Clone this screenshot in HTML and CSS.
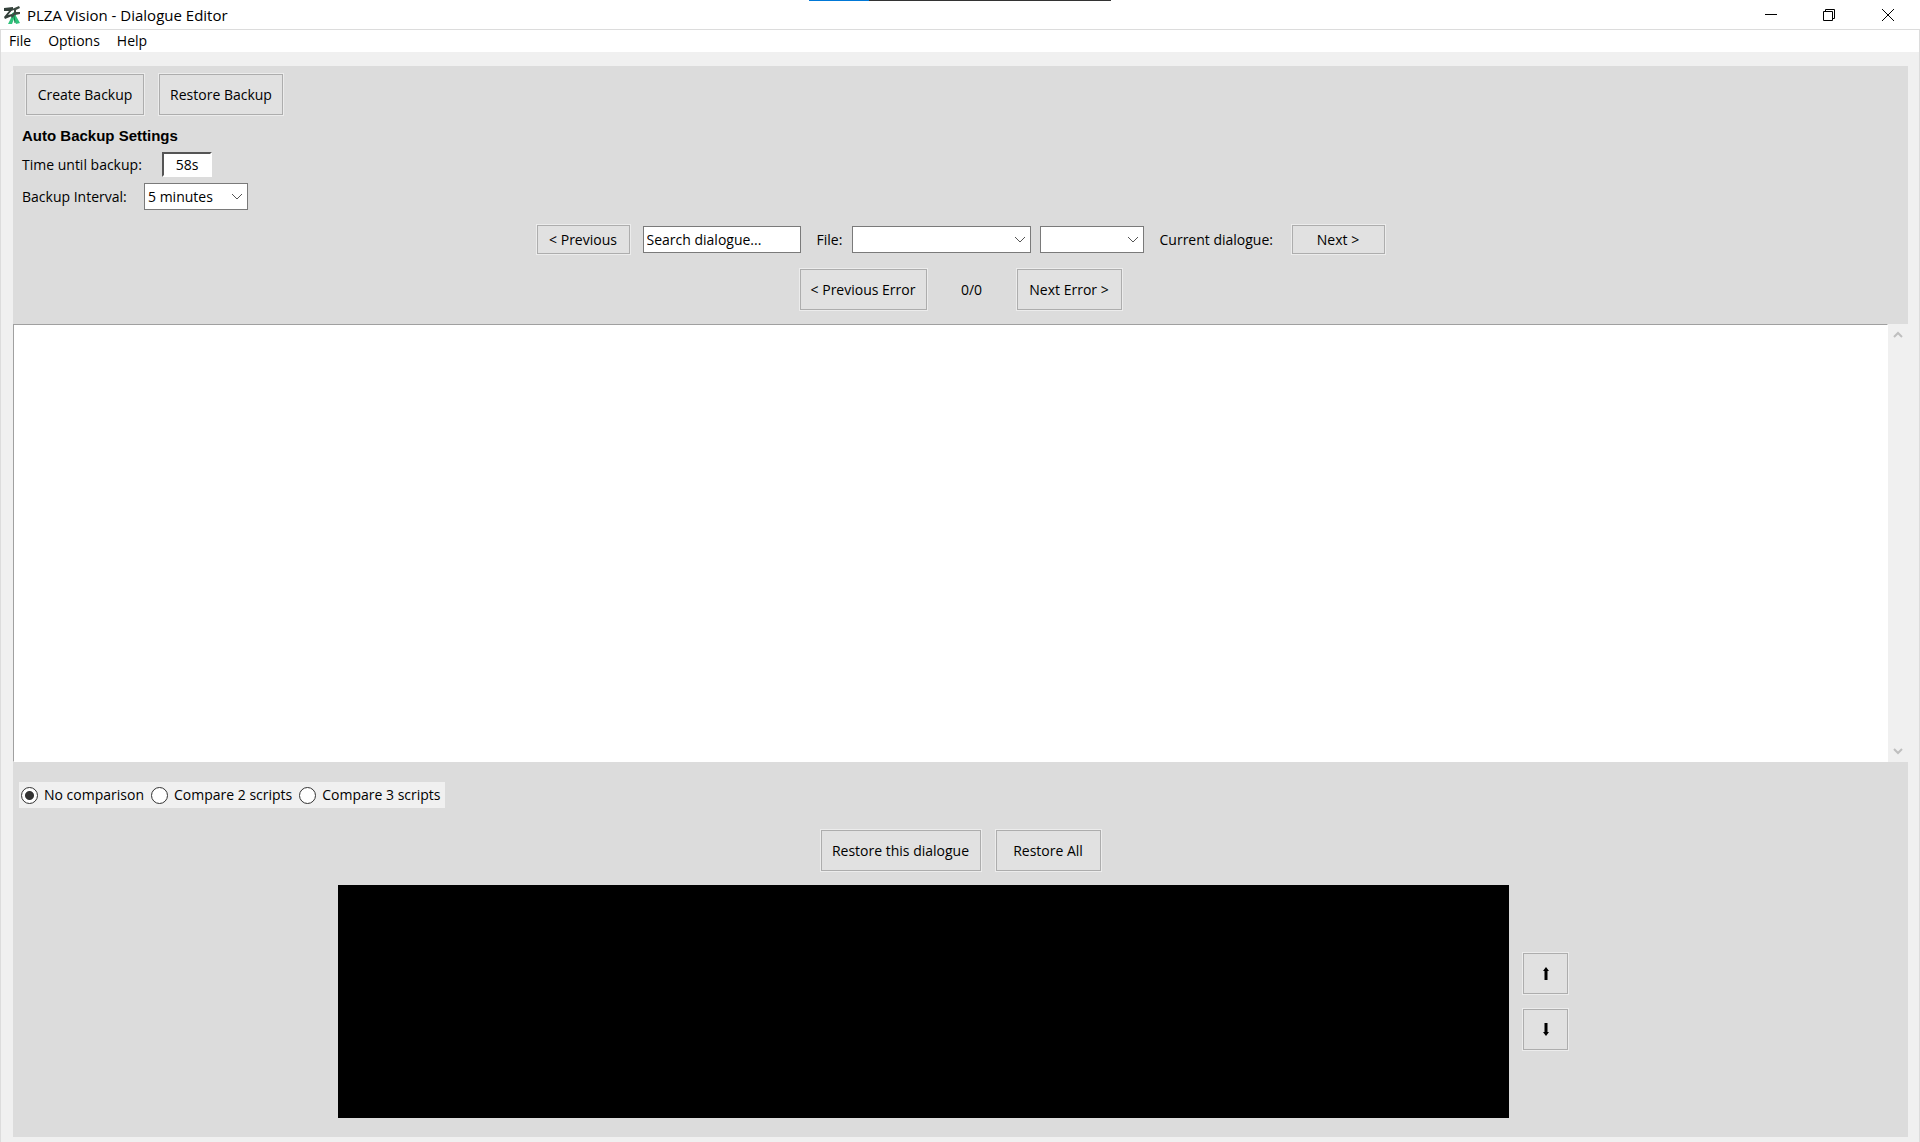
FILE: index.html
```html
<!DOCTYPE html>
<html lang="en">
<head>
<meta charset="UTF-8">
<meta name="viewport" content="width=device-width, initial-scale=1.0">
<title>PLZA Vision - Dialogue Editor</title>
<link rel="stylesheet" href="styles.css">
</head>
<body>
    <div class="load-bar"></div>
    <header class="titlebar">
        <svg class="logo" width="18" height="20" viewBox="0 0 18 20">
            <path d="M9 8L13 7L13 11L17 18L13 19L11 14L9 19L5 19L8 13Z" fill="#2fc27a"/>
            <path d="M1 3L10 2L10 4L5 10L9 9L9 11L2 14L1 12L6 6L1 6Z" fill="#33403a"/>
            <path d="M9 4L16 1L17 3L13 5L13 7L17 7L17 9L12 10L9 13L8 11L11 7L11 5L8 6Z" fill="#3c4a42"/>
            <path d="M11 11L12 18" stroke="#167a48" stroke-width="1"/>
        </svg>
        <h1>PLZA Vision - Dialogue Editor</h1>
        <div class="window-buttons">
            <button type="button" aria-label="Minimize">
                <svg width="12" height="12" viewBox="0 0 12 12"><path d="M0 5.500h12"/></svg>
            </button>
            <button type="button" aria-label="Restore">
                <svg width="12" height="12" viewBox="0 0 12 12"><path d="M.5 2.500h9v9h-9zM2.500 2.500v-2h9v9h-2"/></svg>
            </button>
            <button type="button" aria-label="Close">
                <svg width="12" height="12" viewBox="0 0 12 12"><path d="M0 0l12 12M12 0L0 12"/></svg>
            </button>
        </div>
    </header>
    <nav class="menubar">
        <a href="#">File</a>
        <a href="#">Options</a>
        <a href="#">Help</a>
    </nav>

    <main class="window">
        <section class="top">
            <div class="backup-buttons">
                <button type="button" class="btn create">Create Backup</button>
                <button type="button" class="btn restore">Restore Backup</button>
            </div>
            <h2>Auto Backup Settings</h2>
            <div class="setting">
                <label class="time-label" for="timer">Time until backup:</label>
                <input type="text" id="timer" class="timer" value="58s" readonly>
            </div>
            <div class="setting">
                <label class="interval-label" for="interval">Backup Interval:</label>
                <span class="combo small">
                    <select id="interval">
                        <option>5 minutes</option>
                    </select>
                    <svg width="12" height="7" viewBox="0 0 12 7"><path d="M1 1L6 6L11 1"/></svg>
                </span>
            </div>
            <div class="nav-row">
                <button type="button" class="btn step">&lt; Previous</button>
                <input type="text" class="search" value="Search dialogue..." aria-label="Search dialogue">
                <label class="file-label" for="file">File:</label>
                <span class="combo large">
                    <select id="file"><option></option></select>
                    <svg width="12" height="7" viewBox="0 0 12 7"><path d="M1 1L6 6L11 1"/></svg>
                </span>
                <span class="combo small">
                    <select aria-label="Dialogue"><option></option></select>
                    <svg width="12" height="7" viewBox="0 0 12 7"><path d="M1 1L6 6L11 1"/></svg>
                </span>
                <span class="current">Current dialogue:</span>
                <button type="button" class="btn step">Next &gt;</button>
            </div>
            <div class="error-row">
                <button type="button" class="btn prev-error">&lt; Previous Error</button>
                <span class="error-count">0/0</span>
                <button type="button" class="btn next-error">Next Error &gt;</button>
            </div>
        </section>

        <section class="editor">
            <textarea aria-label="Dialogue text"></textarea>
            <div class="scrollbar">
                <svg width="10" height="8" viewBox="0 0 10 8"><path d="M1 6L5 2L9 6"/></svg>
                <svg width="10" height="8" viewBox="0 0 10 8"><path d="M1 2L5 6L9 2"/></svg>
            </div>
        </section>

        <section class="bottom">
            <div class="compare">
                <label><input type="radio" name="compare" checked>No comparison</label>
                <label><input type="radio" name="compare">Compare 2 scripts</label>
                <label><input type="radio" name="compare">Compare 3 scripts</label>
            </div>
            <div class="restore-row">
                <button type="button" class="btn restore-one">Restore this dialogue</button>
                <button type="button" class="btn restore-all">Restore All</button>
            </div>
            <div class="preview-row">
                <div class="preview"></div>
                <div class="arrows">
                    <button type="button" class="btn arrow" aria-label="Up">
                        <svg width="8" height="14" viewBox="0 0 8 14"><path d="M4 0L7 4H5.500V13H2.500V4H1Z"/></svg>
                    </button>
                    <button type="button" class="btn arrow" aria-label="Down">
                        <svg width="8" height="14" viewBox="0 0 8 14"><path d="M4 13L7 9H5.500V0H2.500V9H1Z"/></svg>
                    </button>
                </div>
            </div>
        </section>
    </main>
</body>
</html>
```

FILE: styles.css
```css
* {
    box-sizing: border-box;
}

body {
    display: flex;
    flex-direction: column;
    min-height: 100vh;
    margin: 0;
    background-color: #f0f0f0;
    color: #000;
    font-family: "Open Sans", "Noto Sans", sans-serif;
    font-size: 14px;
    line-height: 20px;
}

button,
input,
select,
textarea {
    font: inherit;
    color: inherit;
    margin: 0;
}

/* thin progress strip over the title bar */
.load-bar {
    position: absolute;
    top: 0;
    left: 50%;
    width: 302px;
    height: 1px;
    margin-left: -151px;
    background: linear-gradient(to right, #0078d7 60px, #333 60px);
}

.titlebar {
    display: flex;
    align-items: center;
    height: 30px;
    padding-left: 3px;
    background-color: #fff;
    border-bottom: 1px solid #dcdcdc;
}

.titlebar h1 {
    flex: 1;
    margin: 0 0 0 6px;
    font-size: 15px;
    font-weight: normal;
}

.window-buttons {
    display: flex;
}

.window-buttons button {
    display: flex;
    align-items: center;
    justify-content: center;
    width: 58px;
    height: 28px;
    padding: 0;
    border: none;
    background: none;
}

.window-buttons button:last-child {
    margin-left: 1px;
    margin-right: 3px;
}

.window-buttons svg {
    fill: none;
    stroke: #000;
}

.menubar {
    display: flex;
    gap: 17px;
    height: 22px;
    padding-left: 8px;
    background-color: #fff;
    border-left: 1px solid #dcdcdc;
    border-right: 1px solid #dcdcdc;
    line-height: 22px;
}

.menubar a {
    color: #000;
    text-decoration: none;
}

.window {
    flex: 1;
    display: flex;
    flex-direction: column;
    padding: 14px 11px 5px 12px;
    border-left: 1px solid #dcdcdc;
    border-right: 1px solid #dcdcdc;
}

.top,
.bottom {
    background-color: #dcdcdc;
}

.btn {
    height: 41px;
    padding: 0;
    border: 1px solid #adadad;
    background-color: #e1e1e1;
    outline: 1px solid #ececec;
    white-space: nowrap;
}

.top {
    padding: 8px 0 14px;
}

.backup-buttons {
    display: flex;
    gap: 15px;
    padding-left: 13px;
}

.create {
    width: 118px;
}

.restore {
    width: 124px;
}

.top h2 {
    margin: 11px 0 6px;
    padding-left: 9px;
    font-family: "Liberation Sans", Arial, sans-serif;
    font-size: 15px;
    line-height: 20px;
}

.setting {
    display: flex;
    align-items: center;
    margin-bottom: 6px;
    padding-left: 9px;
}

.time-label {
    width: 140px;
}

.interval-label {
    width: 122px;
}

.timer {
    width: 50px;
    height: 25px;
    padding: 0;
    border: 2px solid #fff;
    border-top-color: #555;
    border-left-color: #555;
    background-color: #fff;
    text-align: center;
}

.combo {
    position: relative;
    height: 27px;
}

.combo select {
    width: 100%;
    height: 100%;
    padding: 0 3px;
    border: 1px solid #7a7a7a;
    border-radius: 0;
    background-color: #fff;
    appearance: none;
}

.combo svg {
    position: absolute;
    top: 10px;
    right: 5px;
    fill: none;
    stroke: #555;
    pointer-events: none;
}

.small {
    width: 104px;
}

.large {
    width: 179px;
}

.nav-row {
    display: flex;
    align-items: center;
    justify-content: center;
    margin-top: 15px;
}

.step {
    width: 93px;
    height: 29px;
}

.search {
    width: 158px;
    height: 27px;
    margin-left: 13px;
    padding: 0 3px;
    border: 1px solid #7a7a7a;
}

.file-label {
    width: 35px;
    margin-left: 16px;
}

.large + .small {
    margin-left: 9px;
}

.current {
    width: 132px;
    margin-left: 16px;
}

.error-row {
    display: flex;
    align-items: center;
    justify-content: center;
    margin-top: 15px;
}

.prev-error {
    width: 127px;
}

.error-count {
    width: 90px;
    text-align: center;
}

.next-error {
    width: 105px;
}

.editor {
    flex: 1;
    display: flex;
    min-height: 200px;
}

.editor textarea {
    flex: 1;
    padding: 4px;
    border: 1px solid #fff;
    border-top-color: #a0a0a0;
    border-left-color: #a0a0a0;
    background-color: #fff;
    outline: none;
    resize: none;
}

.scrollbar {
    display: flex;
    flex-direction: column;
    align-items: center;
    justify-content: space-between;
    width: 20px;
    padding: 7px 0;
}

.scrollbar svg {
    fill: none;
    stroke: #bfbfbf;
    stroke-width: 2;
}

.bottom {
    padding: 20px 0 19px;
}

.compare {
    display: flex;
    gap: 7px;
    width: fit-content;
    height: 26px;
    margin-left: 6px;
    padding: 0 4px 0 2px;
    background-color: #f0f0f0;
}

.compare label {
    display: flex;
    align-items: center;
    gap: 6px;
}

.compare input {
    width: 17px;
    height: 17px;
    border: 1px solid #333;
    border-radius: 50%;
    background-color: #fff;
    appearance: none;
}

.compare input:checked {
    background: radial-gradient(circle, #333 4px, #fff 5px);
}

.restore-row {
    display: flex;
    justify-content: center;
    gap: 15px;
    margin-top: 22px;
}

.restore-one {
    width: 160px;
}

.restore-all {
    width: 105px;
}

.preview-row {
    display: flex;
    align-items: center;
    gap: 14px;
    margin-top: 14px;
    padding: 0 340px 0 325px;
}

.preview {
    flex: 1;
    height: 233px;
    background-color: #000;
}

.arrows {
    display: flex;
    flex-direction: column;
    gap: 15px;
}

.arrow {
    display: flex;
    align-items: center;
    justify-content: center;
    width: 45px;
}
```
